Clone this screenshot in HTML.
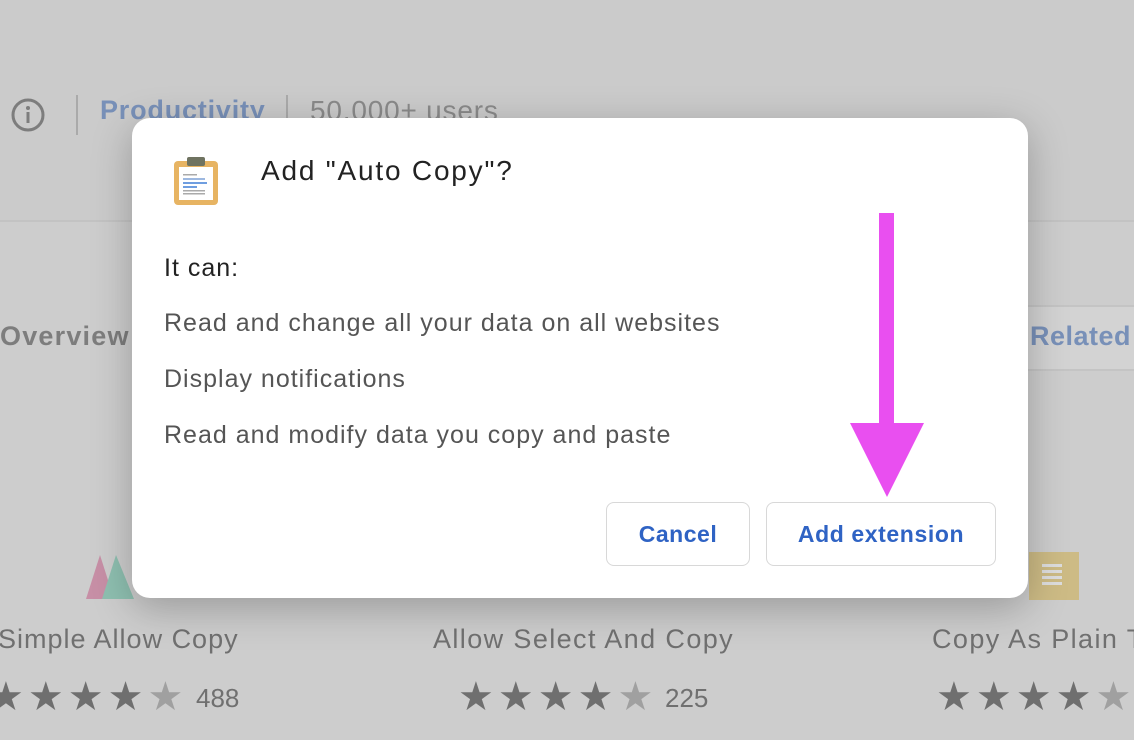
<!DOCTYPE html>
<html><head><style>
*{margin:0;padding:0;box-sizing:border-box}
body{width:1134px;height:740px;overflow:hidden;background:#cdcdcd;font-family:"Liberation Sans",sans-serif;position:relative}
.a{position:absolute;white-space:nowrap}
.st{font-size:40px;color:#6f6f6f;letter-spacing:4px}
</style></head><body>
<div class="a" style="left:0;top:0;width:1134px;height:222px;background:#cbcbcb;border-bottom:2px solid #c3c3c3"></div>
<svg class="a" style="left:10px;top:97px" width="36" height="36"><circle cx="18" cy="18" r="15" fill="none" stroke="#7d7d7d" stroke-width="3"/><rect x="16.5" y="15" width="3" height="11" fill="#7d7d7d"/><circle cx="18" cy="11" r="2" fill="#7d7d7d"/></svg>
<div class="a" style="left:76px;top:95px;width:2px;height:40px;background:#aaa"></div>
<div class="a" style="left:100px;top:95px;font-size:27px;color:#7890b8;letter-spacing:0.8px;font-weight:bold">Productivity</div>
<div class="a" style="left:286px;top:95px;width:2px;height:30px;background:#aaa"></div>
<div class="a" style="left:310px;top:95px;font-size:28px;color:#8a8a8a;letter-spacing:0.8px">50,000+ users</div>
<div class="a" style="left:0;top:321px;font-size:27px;color:#7d7d7d;letter-spacing:1.2px;font-weight:bold">Overview</div>
<div class="a" style="left:1020px;top:305px;width:114px;height:66px;background:#d3d3d3;border-top:2px solid #c4c4c4;border-bottom:2px solid #c4c4c4"></div>
<div class="a" style="left:1030px;top:321px;font-size:27px;color:#7890b8;font-weight:bold;letter-spacing:0.5px">Related</div>
<svg class="a" style="left:86px;top:555px" width="56" height="44"><polygon points="0,44 14,0 28,44" fill="#c78fa6"/><polygon points="16,44 30,0 48,44" fill="#8ebfb0"/></svg>
<div class="a" style="left:1029px;top:552px;width:50px;height:48px;background:#cdbb85"></div>
<div class="a" style="left:1042px;top:564px;width:20px;height:3px;background:#ddd;box-shadow:0 6px 0 #ddd,0 12px 0 #ddd,0 18px 0 #ddd"></div>
<div class="a" style="left:-2px;top:624px;font-size:27px;color:#707070;letter-spacing:1px">Simple Allow Copy</div>
<div class="a" style="left:433px;top:624px;font-size:27px;color:#707070;letter-spacing:1.4px">Allow Select And Copy</div>
<div class="a" style="left:932px;top:624px;font-size:27px;color:#707070;letter-spacing:1.4px">Copy As Plain Text</div>
<div class="a st" style="left:-12px;top:674px">★★★★<span style="color:#a0a0a0">★</span></div>
<div class="a" style="left:196px;top:683px;font-size:26px;color:#707070">488</div>
<div class="a st" style="left:458px;top:674px">★★★★<span style="color:#a0a0a0">★</span></div>
<div class="a" style="left:665px;top:683px;font-size:26px;color:#707070">225</div>
<div class="a st" style="left:936px;top:674px">★★★★<span style="color:#a0a0a0">★</span></div>
<div class="a" style="left:132px;top:118px;width:896px;height:480px;background:#fff;border-radius:18px;box-shadow:0 10px 40px rgba(0,0,0,.25)"></div>
<svg class="a" style="left:170px;top:155px" width="52" height="52">
<rect x="4" y="6" width="44" height="44" rx="4" fill="#e7b463"/>
<rect x="9" y="12" width="34" height="33" fill="#fff"/>
<rect x="17" y="2" width="18" height="9" rx="2" fill="#6f7360"/>
<rect x="13" y="19" width="14" height="1.5" fill="#aaa"/>
<rect x="13" y="23" width="22" height="2" fill="#9db8e0"/>
<rect x="13" y="27" width="24" height="2" fill="#6f9ee0"/>
<rect x="13" y="31" width="14" height="2" fill="#6f9ee0"/>
<rect x="13" y="35" width="22" height="1.5" fill="#aaa"/>
<rect x="13" y="38" width="22" height="1.5" fill="#aaa"/>
</svg>
<div class="a" style="left:261px;top:155px;font-size:28px;color:#222;letter-spacing:1.8px">Add "Auto Copy"?</div>
<div class="a" style="left:164px;top:254px;font-size:25px;color:#222;letter-spacing:1px">It can:</div>
<div class="a" style="left:164px;top:309px;font-size:25px;color:#555;letter-spacing:1px">Read and change all your data on all websites</div>
<div class="a" style="left:164px;top:365px;font-size:25px;color:#555;letter-spacing:1px">Display notifications</div>
<div class="a" style="left:164px;top:421px;font-size:25px;color:#555;letter-spacing:1px">Read and modify data you copy and paste</div>
<div class="a" style="left:606px;top:502px;width:144px;height:64px;border:1px solid #d8d8d8;border-radius:8px;font-size:23px;color:#2f63c4;text-align:center;line-height:62px;font-weight:bold;letter-spacing:0.5px">Cancel</div>
<div class="a" style="left:766px;top:502px;width:230px;height:64px;border:1px solid #d8d8d8;border-radius:8px;font-size:23px;color:#2f63c4;text-align:center;line-height:62px;font-weight:bold;letter-spacing:0.6px">Add extension</div>
<svg class="a" style="left:0;top:0" width="1134" height="740"><rect x="879" y="213" width="15" height="212" fill="#e94ff0"/><polygon points="850,423 924,423 887,497" fill="#e94ff0"/></svg>
</body></html>
